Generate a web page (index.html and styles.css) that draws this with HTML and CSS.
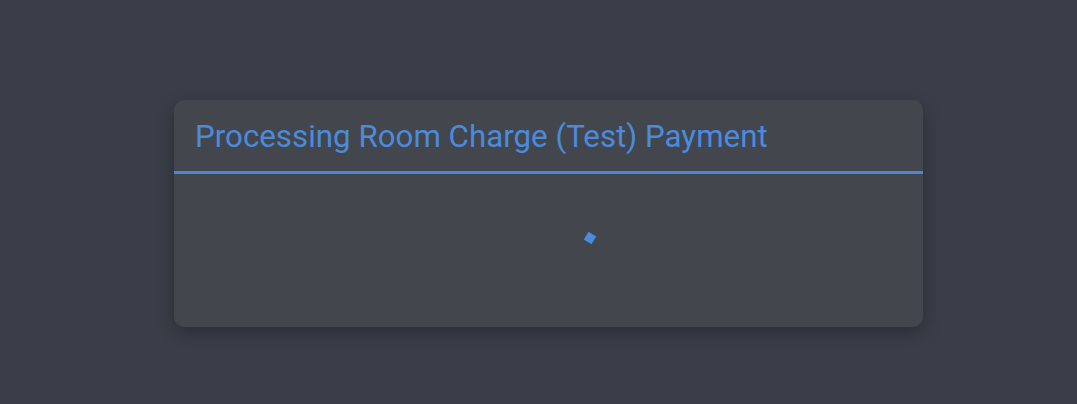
FILE: index.html
```html
<!DOCTYPE html>
<html lang="en">
<head>
<meta charset="utf-8">
<title>Processing Payment</title>
<link rel="stylesheet" href="styles.css">
</head>
<body>
<main class="stage">
  <section class="dialog">
    <header class="dialog-header">
      <h1 class="dialog-title">Processing Room Charge (Test) Payment</h1>
    </header>
    <div class="dialog-body">
      <svg class="spinner" width="90" height="90" viewBox="0 0 90 90" aria-hidden="true">
        <rect x="81.5" y="27.5" width="9" height="9" fill="#4a8bdc" transform="rotate(32 86 32)"/>
      </svg>
    </div>
  </section>
</main>
</body>
</html>
```
FILE: styles.css
```css
html, body {
  margin: 0;
  height: 100%;
  background: #3a3e48;
}
body {
  font-family: Roboto, "Noto Sans", "Liberation Sans", sans-serif;
}
.stage {
  padding: 100px 0 0 174px;
}
.dialog {
  width: 749px;
  height: 227px;
  background: #44464e;
  border-radius: 10px;
  box-shadow: 0 6px 18px rgba(0, 0, 0, 0.28);
  display: flex;
  flex-direction: column;
  overflow: hidden;
}
.dialog-header {
  padding: 18px 21px 16px;
  border-bottom: 3px solid #4a88d6;
}
.dialog-title {
  margin: 0;
  font-size: 31.3px;
  font-weight: 400;
  line-height: 37px;
  color: #4a8bdc;
}
.dialog-body {
  flex: 1;
  display: flex;
  align-items: center;
  justify-content: center;
}
.spinner {
  display: block;
  overflow: visible;
}
```
